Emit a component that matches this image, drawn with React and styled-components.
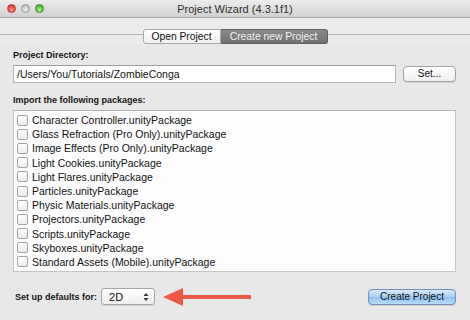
import React from "react";
import styled, { createGlobalStyle } from "styled-components";

const Global = createGlobalStyle`
  html, body { margin: 0; padding: 0; }
  body { width: 470px; height: 320px; overflow: hidden; font-family: "Liberation Sans", Arial, sans-serif; }
`;

const Window = styled.div`
  width: 470px;
  height: 320px;
  background: #e8e8e8;
  display: flex;
  flex-direction: column;
  color: #1a1a1a;
`;

const TitleBar = styled.div`
  height: 17px;
  display: grid;
  grid-template-columns: 1fr auto 1fr;
  align-items: center;
  background: linear-gradient(#ececec, #d2d2d2);
  border-bottom: 1px solid #a9a9a9;
`;

const Lights = styled.div`
  display: flex;
  gap: 5px;
  padding-left: 7px;
`;

const Light = styled.span`
  width: 9px;
  height: 9px;
  border-radius: 50%;
  box-sizing: border-box;
  border: 1px solid ${(p) => p.$edge};
  background: radial-gradient(circle at 50% 70%, ${(p) => p.$hi} 0%, ${(p) => p.$c} 60%, ${(p) => p.$edge} 100%);
`;

const Title = styled.div`
  font-size: 11px;
  color: #2e2e2e;
  white-space: nowrap;
`;

const TabBar = styled.div`
  display: flex;
  align-items: flex-start;
  padding-top: 11px;
  background: #ececec;
`;

const TabLine = styled.div`
  flex: 1;
  height: 1px;
  margin-top: 5px;
  background: #b3b3b3;
`;

const Tab = styled.div`
  width: ${(p) => p.$w}px;
  height: 15px;
  box-sizing: border-box;
  font-size: 10.3px;
  line-height: 14px;
  text-align: center;
  white-space: nowrap;
  border: 1px solid ${(p) => (p.$active ? "#5f5f5f" : "#a7a7a7")};
  color: ${(p) => (p.$active ? "#f2f2f2" : "#111")};
  background: ${(p) =>
    p.$active ? "linear-gradient(#8a8a8a, #707070)" : "linear-gradient(#ffffff, #f1f1f1)"};
  border-radius: ${(p) => (p.$first ? "3px 0 0 3px" : "0 3px 3px 0")};
  ${(p) => p.$active && "border-left: none;"}
`;

const Body = styled.div`
  flex: 1;
  display: flex;
  flex-direction: column;
  padding: 0 14px 0 13px;
`;

const Label = styled.div`
  font-size: 9px;
  font-weight: bold;
  line-height: 12px;
  margin-top: ${(p) => p.$mt}px;
  color: #151515;
`;

const DirRow = styled.div`
  display: flex;
  align-items: center;
  gap: 7px;
  margin-top: 4px;
`;

const PathInput = styled.div`
  flex: 1;
  height: 18px;
  box-sizing: border-box;
  border: 1px solid #b6b6b6;
  border-top-color: #9e9e9e;
  background: #fff;
  font-size: 10.5px;
  line-height: 16px;
  padding-left: 3px;
  color: #111;
`;

const Button = styled.div`
  height: 16px;
  box-sizing: border-box;
  width: ${(p) => p.$w}px;
  border-radius: 4px;
  border: 1px solid ${(p) => (p.$primary ? "#6f8fb8" : "#a2a2a2")};
  background: ${(p) =>
    p.$primary
      ? "linear-gradient(#d7eafb 0%, #a9cff4 50%, #8fc0f0 51%, #b8dcfb 100%)"
      : "linear-gradient(#ffffff, #f0f0f0)"};
  font-size: 10px;
  line-height: 14px;
  text-align: center;
  color: #111;
  box-shadow: 0 1px 1px rgba(0, 0, 0, 0.12);
`;

const List = styled.div`
  margin-top: 4px;
  height: 162px;
  box-sizing: border-box;
  border: 1px solid #c4c4c4;
  border-top-color: #b4b4b4;
  background: #fdfdfd;
  padding: 2px 0 0 3px;
  overflow: hidden;
`;

const Row = styled.div`
  height: 14.2px;
  display: flex;
  align-items: center;
  gap: 4px;
  font-size: 10.5px;
  white-space: nowrap;
  color: #121212;
`;

const Check = styled.span`
  width: 11px;
  height: 11px;
  box-sizing: border-box;
  border: 1px solid #a4a4a4;
  border-radius: 2px;
  background: linear-gradient(#ffffff, #ececec);
  flex: none;
`;

const Footer = styled.div`
  display: flex;
  align-items: center;
  margin-top: 16px;
  padding-left: 2px;
  height: 17px;
`;

const Select = styled.div`
  margin-left: 4px;
  width: 54px;
  height: 17px;
  box-sizing: border-box;
  border: 1px solid #a5a5a5;
  border-radius: 3px;
  background: linear-gradient(#ffffff, #eeeeee);
  box-shadow: 0 1px 1px rgba(0, 0, 0, 0.1);
  display: flex;
  align-items: center;
  justify-content: space-between;
  padding: 0 5px 0 7px;
  font-size: 11px;
  color: #111;
`;

const Spacer = styled.div`
  flex: 1;
`;

const Arrow = styled.svg`
  margin-left: 8px;
  display: block;
`;

const packages = [
  "Character Controller.unityPackage",
  "Glass Refraction (Pro Only).unityPackage",
  "Image Effects (Pro Only).unityPackage",
  "Light Cookies.unityPackage",
  "Light Flares.unityPackage",
  "Particles.unityPackage",
  "Physic Materials.unityPackage",
  "Projectors.unityPackage",
  "Scripts.unityPackage",
  "Skyboxes.unityPackage",
  "Standard Assets (Mobile).unityPackage",
  "Terrain Assets.unityPackage",
];

export default function App() {
  return (
    <>
      <Global />
      <Window>
        <TitleBar>
          <Lights>
            <Light $c="#e8463f" $hi="#ff9b8f" $edge="#b23a33" />
            <Light $c="#c9c9c9" $hi="#f2f2f2" $edge="#9c9c9c" />
            <Light $c="#5cbf3e" $hi="#b6f29c" $edge="#3f8a2b" />
          </Lights>
          <Title>Project Wizard (4.3.1f1)</Title>
          <div />
        </TitleBar>
        <TabBar>
          <TabLine />
          <Tab $first $w={78}>Open Project</Tab>
          <Tab $active $w={107}>Create new Project</Tab>
          <TabLine />
        </TabBar>
        <Body>
          <Label $mt={5}>Project Directory:</Label>
          <DirRow>
            <PathInput>/Users/You/Tutorials/ZombieConga</PathInput>
            <Button $w={53}>Set...</Button>
          </DirRow>
          <Label $mt={11}>Import the following packages:</Label>
          <List>
            {packages.map((p) => (
              <Row key={p}>
                <Check />
                {p}
              </Row>
            ))}
          </List>
          <Footer>
            <Label $mt={0}>Set up defaults for:</Label>
            <Select>
              <span>2D</span>
              <svg width="6" height="10" viewBox="0 0 6 10">
                <path d="M0.5 4 L3 1 L5.5 4 Z" fill="#333" />
                <path d="M0.5 6 L3 9 L5.5 6 Z" fill="#333" />
              </svg>
            </Select>
            <Arrow width="88" height="20" viewBox="0 0 88 20">
              <rect x="17" y="8" width="71" height="4" fill="#ea5a46" />
              <polygon points="0,10 20,1 20,19" fill="#ea5a46" />
            </Arrow>
            <Spacer />
            <Button $w={88} $primary>
              Create Project
            </Button>
          </Footer>
        </Body>
      </Window>
    </>
  );
}
